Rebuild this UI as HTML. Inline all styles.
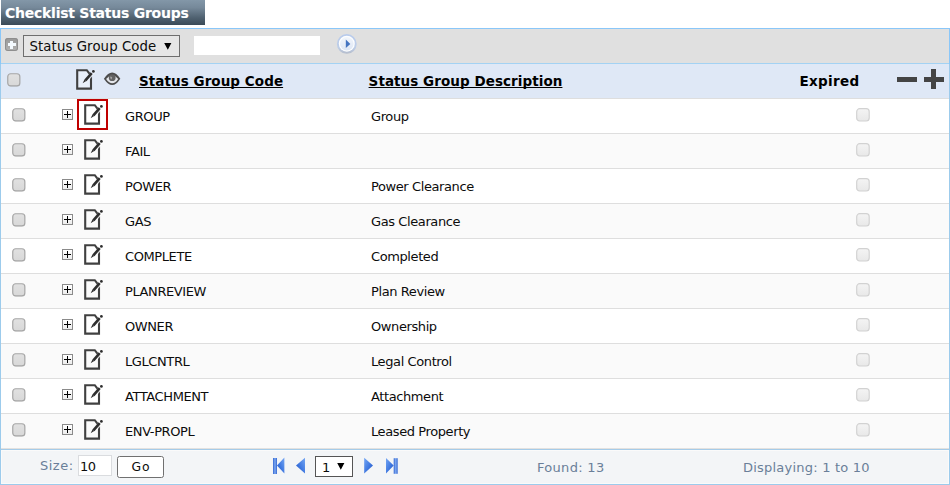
<!DOCTYPE html>
<html>
<head>
<meta charset="utf-8">
<title>Checklist Status Groups</title>
<style>
html,body{margin:0;padding:0;background:#fff;}
body{width:950px;height:485px;overflow:hidden;position:relative;font-family:"DejaVu Sans","Liberation Sans",sans-serif;font-size:13px;letter-spacing:-0.4px;color:#0c0c0c;}
.abs{position:absolute;}
#title{left:1px;top:0;width:204px;height:25px;background:linear-gradient(#8397a8 0%,#76899a 30%,#506271 70%,#3a4a57 100%);color:#fff;font-weight:bold;font-size:14px;letter-spacing:-0.25px;line-height:27px;text-indent:4px;text-shadow:0 0 1px rgba(255,255,255,.25);white-space:nowrap;}
#panel{left:0;top:28px;width:948px;height:455px;border:1px solid #9ccbec;border-top-color:#93cdf5;}
#toolbar{left:1px;top:29px;width:948px;height:34px;background:#e0e0e0;}
#tbline{left:1px;top:63px;width:948px;height:1px;background:#a3d2f3;}
#hdr{left:1px;top:64px;width:948px;height:34px;background:#dfe8f6;}
.row{left:1px;width:948px;height:34px;border-top:1px solid #dedede;background:#fff;}
.row.alt{background:#fafafa;}
.plus{width:9px;height:9px;border:1px solid #8a8a8a;background:linear-gradient(#fff,#ececec);}
.plus:before{content:"";position:absolute;left:1px;top:4px;width:7px;height:1px;background:#000;}
.plus:after{content:"";position:absolute;left:4px;top:1px;width:1px;height:7px;background:#000;}
.txt{white-space:nowrap;line-height:16px;}
.h{font-weight:bold;font-size:13.5px;letter-spacing:0.06px;text-decoration:underline;text-decoration-skip-ink:none;text-underline-offset:1px;color:#000;white-space:nowrap;line-height:16px;}
#footer{left:1px;top:449px;width:948px;height:35px;border-top:1px solid #a5cbe8;background:#f3f5f7;box-sizing:border-box;box-shadow:inset 0 0 0 1px #fafafa;}
.ft{color:#6a7f99;white-space:nowrap;line-height:16px;font-size:13px;letter-spacing:0.3px;}
</style>
</head>
<body>
<svg width="0" height="0" style="position:absolute"><defs>
<linearGradient id="cbg" x1="0" y1="0" x2="0" y2="1"><stop offset="0" stop-color="#e1e1e1"/><stop offset="1" stop-color="#d8d8d8"/></linearGradient>
<linearGradient id="cbdg" x1="0" y1="0" x2="0" y2="1"><stop offset="0" stop-color="#f4f4f4"/><stop offset="1" stop-color="#e8e8e8"/></linearGradient>
</defs></svg>
<div id="title" class="abs">Checklist Status Groups</div>
<div id="panel" class="abs"></div>
<div id="toolbar" class="abs"></div>
<div class="abs" style="left:0;top:28px;width:948px;height:35px;border:1px solid #8ac7f9;border-bottom:none;"></div>
<div id="tbline" class="abs"></div>
<div id="hdr" class="abs"></div>

<!-- toolbar contents -->
<div class="abs" style="left:5px;top:38px;width:13px;height:13px;border-radius:3px;background:linear-gradient(#989898,#b2b2b2);box-shadow:0 0 0 1px #8e8e8e inset;">
  <div class="abs" style="left:2.5px;top:5px;width:8px;height:3px;background:#f4faff;"></div>
  <div class="abs" style="left:5px;top:2.5px;width:3px;height:8px;background:#f4faff;"></div>
</div>
<div class="abs" style="left:23px;top:35px;width:155px;height:20px;border:1px solid #6e6e6e;background:#e6e6e6;">
  <div class="abs txt" style="left:5.5px;top:2.6px;font-size:13.3px;letter-spacing:0.09px;">Status Group Code</div>
  <svg class="abs" style="left:140px;top:7px" width="8" height="7" viewBox="0 0 8 7"><path d="M0.2 0 L7.4 0 L3.8 6.8 Z" fill="#000"/></svg>
</div>
<div class="abs" style="left:194px;top:36px;width:126px;height:19px;background:#fff;"></div>
<svg class="abs" style="left:336px;top:33px" width="22" height="22" viewBox="0 0 22 22">
  <defs><linearGradient id="gb" x1="0" y1="0" x2="0" y2="1"><stop offset="0" stop-color="#f2f6fc"/><stop offset="1" stop-color="#dde6f4"/></linearGradient>
  <linearGradient id="gr" x1="0" y1="0" x2="0" y2="1"><stop offset="0" stop-color="#b4c9ee"/><stop offset="0.7" stop-color="#b9cbe8"/><stop offset="1" stop-color="#b0b8c8"/></linearGradient></defs>
  <circle cx="10.8" cy="10.9" r="9.9" fill="url(#gr)" opacity="0.9"/>
  <circle cx="10.8" cy="10.7" r="8" fill="#fdfeff"/>
  <circle cx="10.8" cy="10.7" r="6.8" fill="url(#gb)"/>
  <path d="M9.8 6.6 L14.3 10.9 L9.8 15.1 Z" fill="#4474c0"/>
</svg>

<!-- header contents -->
<svg class="abs" style="left:6px;top:72px" width="16" height="17" viewBox="0 0 16 17"><rect x="1.8" y="2.3" width="12" height="12.2" rx="3" fill="rgba(0,0,0,.10)"/><rect x="1.75" y="1.75" width="12.1" height="12.1" rx="2.9" fill="url(#cbg)" stroke="#a6a6a6" stroke-width="1.2"/></svg>
<svg class="abs" style="left:75px;top:68px" width="22" height="24" viewBox="0 0 22 24"><path d="M2.2 2.2 H11.8 L16 7.6 V20.6 H2.2 Z" fill="rgba(255,255,255,.3)" stroke="#404040" stroke-width="2.1" stroke-linejoin="miter"/><path d="M9.2 14.6 L18.8 3.9" stroke="rgba(235,241,250,.85)" stroke-width="3.8" stroke-linecap="round"/><path d="M10.4 12.3 L16.7 5.2" stroke="#2e2e2e" stroke-width="2.7"/><path d="M7.6 15.2 L9.5 11.5 L11.3 13.1 Z" fill="#2e2e2e"/><circle cx="18.4" cy="3.4" r="1.4" fill="#2e2e2e"/></svg>
<svg class="abs" style="left:103px;top:71px" width="19" height="16" viewBox="0 0 19 16">
  <path d="M0.9 7.8 Q9.3 -4.6 17.3 7.8 Q9.3 20.4 0.9 7.8 Z" fill="#4c4c4c"/>
  <path d="M3.1 7.9 Q9.3 0.6 15.2 7.9 Q9.3 16.6 3.1 7.9 Z" fill="#e4e6ea"/>
  <circle cx="9.2" cy="6.7" r="3.4" fill="#626262"/>
  <path d="M7.6 5.2 L9.2 6.6 L8.4 8.6 L7.2 7 Z" fill="#a8a8a8"/>
</svg>
<div class="abs h" style="left:139px;top:73px;">Status Group Code</div>
<div class="abs h" style="left:368.6px;top:73px;">Status Group Description</div>
<div class="abs h" style="left:799.6px;top:73px;text-decoration:none;letter-spacing:0.3px;">Expired</div>
<div class="abs" style="left:897px;top:77px;width:20px;height:5px;background:#444;"></div>
<div class="abs" style="left:924px;top:77px;width:20px;height:5px;background:#444;"></div>
<div class="abs" style="left:931px;top:69px;width:5px;height:20px;background:#444;"></div>

<!-- rows -->
<div class="abs row" style="top:98px;"></div>
<svg class="abs" style="left:11px;top:107px" width="16" height="17" viewBox="0 0 16 17"><rect x="1.8" y="2.3" width="12" height="12.2" rx="3" fill="rgba(0,0,0,.10)"/><rect x="1.75" y="1.75" width="12.1" height="12.1" rx="2.9" fill="url(#cbg)" stroke="#a6a6a6" stroke-width="1.2"/></svg>
<div class="abs plus" style="left:62px;top:109px;"></div>
<div class="abs" style="left:77px;top:99px;width:27px;height:27px;border:2px solid #c00000;background:#fff;"></div>
<svg class="abs" style="left:83px;top:103px" width="22" height="24" viewBox="0 0 22 24"><path d="M2.2 2.2 H11.8 L16 7.6 V20.6 H2.2 Z" fill="none" stroke="#404040" stroke-width="2.1" stroke-linejoin="miter"/><path d="M9.2 14.6 L18.8 3.9" stroke="rgba(255,255,255,.8)" stroke-width="3.8" stroke-linecap="round"/><path d="M10.4 12.3 L16.7 5.2" stroke="#2e2e2e" stroke-width="2.7"/><path d="M7.6 15.2 L9.5 11.5 L11.3 13.1 Z" fill="#2e2e2e"/><circle cx="18.4" cy="3.4" r="1.4" fill="#2e2e2e"/></svg>
<div class="abs txt" style="left:125px;top:109px;">GROUP</div>
<div class="abs txt" style="left:371px;top:109px;">Group</div>
<svg class="abs" style="left:855px;top:107px" width="17" height="17" viewBox="0 0 17 17"><rect x="1.7" y="1.7" width="12.5" height="12.3" rx="3" fill="url(#cbdg)" stroke="#d2d2d2" stroke-width="1.2"/></svg>
<div class="abs row alt" style="top:133px;"></div>
<svg class="abs" style="left:11px;top:142px" width="16" height="17" viewBox="0 0 16 17"><rect x="1.8" y="2.3" width="12" height="12.2" rx="3" fill="rgba(0,0,0,.10)"/><rect x="1.75" y="1.75" width="12.1" height="12.1" rx="2.9" fill="url(#cbg)" stroke="#a6a6a6" stroke-width="1.2"/></svg>
<div class="abs plus" style="left:62px;top:144px;"></div>
<svg class="abs" style="left:83px;top:138px" width="22" height="24" viewBox="0 0 22 24"><path d="M2.2 2.2 H11.8 L16 7.6 V20.6 H2.2 Z" fill="none" stroke="#404040" stroke-width="2.1" stroke-linejoin="miter"/><path d="M9.2 14.6 L18.8 3.9" stroke="rgba(255,255,255,.8)" stroke-width="3.8" stroke-linecap="round"/><path d="M10.4 12.3 L16.7 5.2" stroke="#2e2e2e" stroke-width="2.7"/><path d="M7.6 15.2 L9.5 11.5 L11.3 13.1 Z" fill="#2e2e2e"/><circle cx="18.4" cy="3.4" r="1.4" fill="#2e2e2e"/></svg>
<div class="abs txt" style="left:125px;top:144px;">FAIL</div>
<svg class="abs" style="left:855px;top:142px" width="17" height="17" viewBox="0 0 17 17"><rect x="1.7" y="1.7" width="12.5" height="12.3" rx="3" fill="url(#cbdg)" stroke="#d2d2d2" stroke-width="1.2"/></svg>
<div class="abs row" style="top:168px;"></div>
<svg class="abs" style="left:11px;top:177px" width="16" height="17" viewBox="0 0 16 17"><rect x="1.8" y="2.3" width="12" height="12.2" rx="3" fill="rgba(0,0,0,.10)"/><rect x="1.75" y="1.75" width="12.1" height="12.1" rx="2.9" fill="url(#cbg)" stroke="#a6a6a6" stroke-width="1.2"/></svg>
<div class="abs plus" style="left:62px;top:179px;"></div>
<svg class="abs" style="left:83px;top:173px" width="22" height="24" viewBox="0 0 22 24"><path d="M2.2 2.2 H11.8 L16 7.6 V20.6 H2.2 Z" fill="none" stroke="#404040" stroke-width="2.1" stroke-linejoin="miter"/><path d="M9.2 14.6 L18.8 3.9" stroke="rgba(255,255,255,.8)" stroke-width="3.8" stroke-linecap="round"/><path d="M10.4 12.3 L16.7 5.2" stroke="#2e2e2e" stroke-width="2.7"/><path d="M7.6 15.2 L9.5 11.5 L11.3 13.1 Z" fill="#2e2e2e"/><circle cx="18.4" cy="3.4" r="1.4" fill="#2e2e2e"/></svg>
<div class="abs txt" style="left:125px;top:179px;">POWER</div>
<div class="abs txt" style="left:371px;top:179px;">Power Clearance</div>
<svg class="abs" style="left:855px;top:177px" width="17" height="17" viewBox="0 0 17 17"><rect x="1.7" y="1.7" width="12.5" height="12.3" rx="3" fill="url(#cbdg)" stroke="#d2d2d2" stroke-width="1.2"/></svg>
<div class="abs row alt" style="top:203px;"></div>
<svg class="abs" style="left:11px;top:212px" width="16" height="17" viewBox="0 0 16 17"><rect x="1.8" y="2.3" width="12" height="12.2" rx="3" fill="rgba(0,0,0,.10)"/><rect x="1.75" y="1.75" width="12.1" height="12.1" rx="2.9" fill="url(#cbg)" stroke="#a6a6a6" stroke-width="1.2"/></svg>
<div class="abs plus" style="left:62px;top:214px;"></div>
<svg class="abs" style="left:83px;top:208px" width="22" height="24" viewBox="0 0 22 24"><path d="M2.2 2.2 H11.8 L16 7.6 V20.6 H2.2 Z" fill="none" stroke="#404040" stroke-width="2.1" stroke-linejoin="miter"/><path d="M9.2 14.6 L18.8 3.9" stroke="rgba(255,255,255,.8)" stroke-width="3.8" stroke-linecap="round"/><path d="M10.4 12.3 L16.7 5.2" stroke="#2e2e2e" stroke-width="2.7"/><path d="M7.6 15.2 L9.5 11.5 L11.3 13.1 Z" fill="#2e2e2e"/><circle cx="18.4" cy="3.4" r="1.4" fill="#2e2e2e"/></svg>
<div class="abs txt" style="left:125px;top:214px;">GAS</div>
<div class="abs txt" style="left:371px;top:214px;">Gas Clearance</div>
<svg class="abs" style="left:855px;top:212px" width="17" height="17" viewBox="0 0 17 17"><rect x="1.7" y="1.7" width="12.5" height="12.3" rx="3" fill="url(#cbdg)" stroke="#d2d2d2" stroke-width="1.2"/></svg>
<div class="abs row" style="top:238px;"></div>
<svg class="abs" style="left:11px;top:247px" width="16" height="17" viewBox="0 0 16 17"><rect x="1.8" y="2.3" width="12" height="12.2" rx="3" fill="rgba(0,0,0,.10)"/><rect x="1.75" y="1.75" width="12.1" height="12.1" rx="2.9" fill="url(#cbg)" stroke="#a6a6a6" stroke-width="1.2"/></svg>
<div class="abs plus" style="left:62px;top:249px;"></div>
<svg class="abs" style="left:83px;top:243px" width="22" height="24" viewBox="0 0 22 24"><path d="M2.2 2.2 H11.8 L16 7.6 V20.6 H2.2 Z" fill="none" stroke="#404040" stroke-width="2.1" stroke-linejoin="miter"/><path d="M9.2 14.6 L18.8 3.9" stroke="rgba(255,255,255,.8)" stroke-width="3.8" stroke-linecap="round"/><path d="M10.4 12.3 L16.7 5.2" stroke="#2e2e2e" stroke-width="2.7"/><path d="M7.6 15.2 L9.5 11.5 L11.3 13.1 Z" fill="#2e2e2e"/><circle cx="18.4" cy="3.4" r="1.4" fill="#2e2e2e"/></svg>
<div class="abs txt" style="left:125px;top:249px;">COMPLETE</div>
<div class="abs txt" style="left:371px;top:249px;">Completed</div>
<svg class="abs" style="left:855px;top:247px" width="17" height="17" viewBox="0 0 17 17"><rect x="1.7" y="1.7" width="12.5" height="12.3" rx="3" fill="url(#cbdg)" stroke="#d2d2d2" stroke-width="1.2"/></svg>
<div class="abs row alt" style="top:273px;"></div>
<svg class="abs" style="left:11px;top:282px" width="16" height="17" viewBox="0 0 16 17"><rect x="1.8" y="2.3" width="12" height="12.2" rx="3" fill="rgba(0,0,0,.10)"/><rect x="1.75" y="1.75" width="12.1" height="12.1" rx="2.9" fill="url(#cbg)" stroke="#a6a6a6" stroke-width="1.2"/></svg>
<div class="abs plus" style="left:62px;top:284px;"></div>
<svg class="abs" style="left:83px;top:278px" width="22" height="24" viewBox="0 0 22 24"><path d="M2.2 2.2 H11.8 L16 7.6 V20.6 H2.2 Z" fill="none" stroke="#404040" stroke-width="2.1" stroke-linejoin="miter"/><path d="M9.2 14.6 L18.8 3.9" stroke="rgba(255,255,255,.8)" stroke-width="3.8" stroke-linecap="round"/><path d="M10.4 12.3 L16.7 5.2" stroke="#2e2e2e" stroke-width="2.7"/><path d="M7.6 15.2 L9.5 11.5 L11.3 13.1 Z" fill="#2e2e2e"/><circle cx="18.4" cy="3.4" r="1.4" fill="#2e2e2e"/></svg>
<div class="abs txt" style="left:125px;top:284px;">PLANREVIEW</div>
<div class="abs txt" style="left:371px;top:284px;">Plan Review</div>
<svg class="abs" style="left:855px;top:282px" width="17" height="17" viewBox="0 0 17 17"><rect x="1.7" y="1.7" width="12.5" height="12.3" rx="3" fill="url(#cbdg)" stroke="#d2d2d2" stroke-width="1.2"/></svg>
<div class="abs row" style="top:308px;"></div>
<svg class="abs" style="left:11px;top:317px" width="16" height="17" viewBox="0 0 16 17"><rect x="1.8" y="2.3" width="12" height="12.2" rx="3" fill="rgba(0,0,0,.10)"/><rect x="1.75" y="1.75" width="12.1" height="12.1" rx="2.9" fill="url(#cbg)" stroke="#a6a6a6" stroke-width="1.2"/></svg>
<div class="abs plus" style="left:62px;top:319px;"></div>
<svg class="abs" style="left:83px;top:313px" width="22" height="24" viewBox="0 0 22 24"><path d="M2.2 2.2 H11.8 L16 7.6 V20.6 H2.2 Z" fill="none" stroke="#404040" stroke-width="2.1" stroke-linejoin="miter"/><path d="M9.2 14.6 L18.8 3.9" stroke="rgba(255,255,255,.8)" stroke-width="3.8" stroke-linecap="round"/><path d="M10.4 12.3 L16.7 5.2" stroke="#2e2e2e" stroke-width="2.7"/><path d="M7.6 15.2 L9.5 11.5 L11.3 13.1 Z" fill="#2e2e2e"/><circle cx="18.4" cy="3.4" r="1.4" fill="#2e2e2e"/></svg>
<div class="abs txt" style="left:125px;top:319px;">OWNER</div>
<div class="abs txt" style="left:371px;top:319px;">Ownership</div>
<svg class="abs" style="left:855px;top:317px" width="17" height="17" viewBox="0 0 17 17"><rect x="1.7" y="1.7" width="12.5" height="12.3" rx="3" fill="url(#cbdg)" stroke="#d2d2d2" stroke-width="1.2"/></svg>
<div class="abs row alt" style="top:343px;"></div>
<svg class="abs" style="left:11px;top:352px" width="16" height="17" viewBox="0 0 16 17"><rect x="1.8" y="2.3" width="12" height="12.2" rx="3" fill="rgba(0,0,0,.10)"/><rect x="1.75" y="1.75" width="12.1" height="12.1" rx="2.9" fill="url(#cbg)" stroke="#a6a6a6" stroke-width="1.2"/></svg>
<div class="abs plus" style="left:62px;top:354px;"></div>
<svg class="abs" style="left:83px;top:348px" width="22" height="24" viewBox="0 0 22 24"><path d="M2.2 2.2 H11.8 L16 7.6 V20.6 H2.2 Z" fill="none" stroke="#404040" stroke-width="2.1" stroke-linejoin="miter"/><path d="M9.2 14.6 L18.8 3.9" stroke="rgba(255,255,255,.8)" stroke-width="3.8" stroke-linecap="round"/><path d="M10.4 12.3 L16.7 5.2" stroke="#2e2e2e" stroke-width="2.7"/><path d="M7.6 15.2 L9.5 11.5 L11.3 13.1 Z" fill="#2e2e2e"/><circle cx="18.4" cy="3.4" r="1.4" fill="#2e2e2e"/></svg>
<div class="abs txt" style="left:125px;top:354px;">LGLCNTRL</div>
<div class="abs txt" style="left:371px;top:354px;">Legal Control</div>
<svg class="abs" style="left:855px;top:352px" width="17" height="17" viewBox="0 0 17 17"><rect x="1.7" y="1.7" width="12.5" height="12.3" rx="3" fill="url(#cbdg)" stroke="#d2d2d2" stroke-width="1.2"/></svg>
<div class="abs row" style="top:378px;"></div>
<svg class="abs" style="left:11px;top:387px" width="16" height="17" viewBox="0 0 16 17"><rect x="1.8" y="2.3" width="12" height="12.2" rx="3" fill="rgba(0,0,0,.10)"/><rect x="1.75" y="1.75" width="12.1" height="12.1" rx="2.9" fill="url(#cbg)" stroke="#a6a6a6" stroke-width="1.2"/></svg>
<div class="abs plus" style="left:62px;top:389px;"></div>
<svg class="abs" style="left:83px;top:383px" width="22" height="24" viewBox="0 0 22 24"><path d="M2.2 2.2 H11.8 L16 7.6 V20.6 H2.2 Z" fill="none" stroke="#404040" stroke-width="2.1" stroke-linejoin="miter"/><path d="M9.2 14.6 L18.8 3.9" stroke="rgba(255,255,255,.8)" stroke-width="3.8" stroke-linecap="round"/><path d="M10.4 12.3 L16.7 5.2" stroke="#2e2e2e" stroke-width="2.7"/><path d="M7.6 15.2 L9.5 11.5 L11.3 13.1 Z" fill="#2e2e2e"/><circle cx="18.4" cy="3.4" r="1.4" fill="#2e2e2e"/></svg>
<div class="abs txt" style="left:125px;top:389px;">ATTACHMENT</div>
<div class="abs txt" style="left:371px;top:389px;">Attachment</div>
<svg class="abs" style="left:855px;top:387px" width="17" height="17" viewBox="0 0 17 17"><rect x="1.7" y="1.7" width="12.5" height="12.3" rx="3" fill="url(#cbdg)" stroke="#d2d2d2" stroke-width="1.2"/></svg>
<div class="abs row alt" style="top:413px;"></div>
<svg class="abs" style="left:11px;top:422px" width="16" height="17" viewBox="0 0 16 17"><rect x="1.8" y="2.3" width="12" height="12.2" rx="3" fill="rgba(0,0,0,.10)"/><rect x="1.75" y="1.75" width="12.1" height="12.1" rx="2.9" fill="url(#cbg)" stroke="#a6a6a6" stroke-width="1.2"/></svg>
<div class="abs plus" style="left:62px;top:424px;"></div>
<svg class="abs" style="left:83px;top:418px" width="22" height="24" viewBox="0 0 22 24"><path d="M2.2 2.2 H11.8 L16 7.6 V20.6 H2.2 Z" fill="none" stroke="#404040" stroke-width="2.1" stroke-linejoin="miter"/><path d="M9.2 14.6 L18.8 3.9" stroke="rgba(255,255,255,.8)" stroke-width="3.8" stroke-linecap="round"/><path d="M10.4 12.3 L16.7 5.2" stroke="#2e2e2e" stroke-width="2.7"/><path d="M7.6 15.2 L9.5 11.5 L11.3 13.1 Z" fill="#2e2e2e"/><circle cx="18.4" cy="3.4" r="1.4" fill="#2e2e2e"/></svg>
<div class="abs txt" style="left:125px;top:424px;">ENV-PROPL</div>
<div class="abs txt" style="left:371px;top:424px;">Leased Property</div>
<svg class="abs" style="left:855px;top:422px" width="17" height="17" viewBox="0 0 17 17"><rect x="1.7" y="1.7" width="12.5" height="12.3" rx="3" fill="url(#cbdg)" stroke="#d2d2d2" stroke-width="1.2"/></svg>

<!-- footer -->
<div class="abs" style="left:1px;top:448px;width:948px;height:1px;background:#e3e1df;"></div>
<div id="footer" class="abs"></div>
<div class="abs ft" style="left:40px;top:458px;letter-spacing:0.5px;">Size:</div>
<div class="abs" style="left:78px;top:455px;width:32px;height:19px;border:1px solid #dadcdf;background:#fff;"><div class="abs txt" style="left:1px;top:3px;">10</div></div>
<div class="abs" style="left:117px;top:456px;width:45px;height:20px;border:1px solid #707070;border-radius:2.5px;background:#fff;"><div class="abs txt" style="left:0.5px;width:45px;text-align:center;top:2px;font-size:12.4px;letter-spacing:0.9px;">Go</div></div>
<svg class="abs" style="left:270px;top:455px" width="135" height="22" viewBox="0 0 135 22">
<defs>
<linearGradient id="pg1" x1="0" y1="0" x2="1" y2="1"><stop offset="0" stop-color="#74a6f4"/><stop offset="0.55" stop-color="#3f78e0"/><stop offset="1" stop-color="#1f50c0"/></linearGradient>
<linearGradient id="pg2" x1="1" y1="0" x2="0" y2="1"><stop offset="0" stop-color="#74a6f4"/><stop offset="0.55" stop-color="#3f78e0"/><stop offset="1" stop-color="#1f50c0"/></linearGradient>
<linearGradient id="pgb" x1="0" y1="0" x2="1" y2="0"><stop offset="0" stop-color="#3366d2"/><stop offset="0.5" stop-color="#7ea9f0"/><stop offset="1" stop-color="#3366d2"/></linearGradient>
</defs>
<rect x="3" y="3" width="4" height="16" fill="url(#pgb)"/><path d="M14.4 2.5 L7 10.5 L14.4 18.5 Z" fill="url(#pg2)"/>
<path d="M35 2.8 L26 10.5 L35 18.4 Z" fill="url(#pg2)"/>
<path d="M94.2 2.8 L103 10.5 L94.2 18.4 Z" fill="url(#pg1)"/>
<path d="M116 3 L123.7 10.5 L116 18.6 Z" fill="url(#pg1)"/><rect x="123.7" y="3.2" width="4" height="15.6" fill="url(#pgb)"/>
</svg>
<div class="abs" style="left:315px;top:456px;width:36px;height:19px;border:1px solid #555;background:#fff;">
  <div class="abs txt" style="left:6px;top:3px;">1</div>
  <svg class="abs" style="left:21px;top:6px" width="8" height="7" viewBox="0 0 8 7"><path d="M0.2 0 L7.4 0 L3.8 6.8 Z" fill="#000"/></svg>
</div>
<div class="abs ft" style="left:537px;top:460px;">Found: 13</div>
<div class="abs ft" style="left:743px;top:460px;letter-spacing:0.22px;">Displaying: 1 to 10</div>
</body>
</html>
